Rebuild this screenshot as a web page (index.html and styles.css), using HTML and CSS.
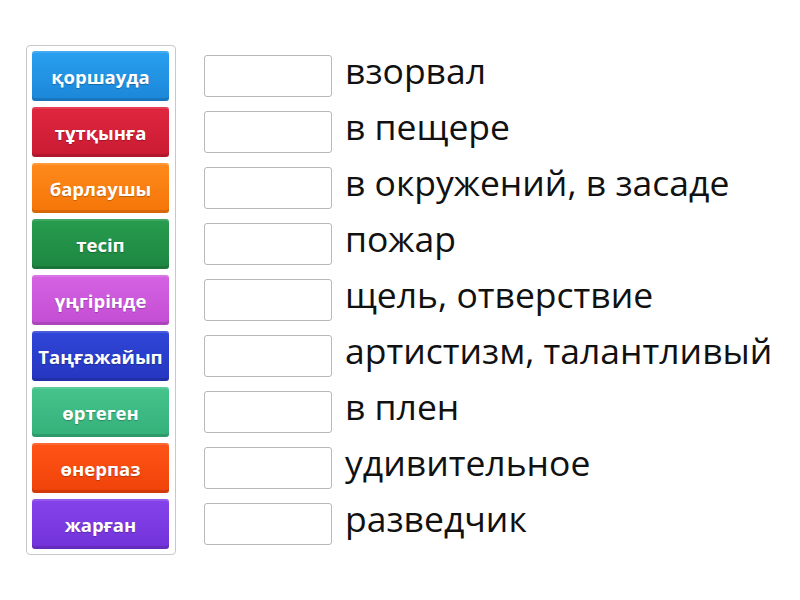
FILE: index.html
```html
<!DOCTYPE html>
<html lang="kk">
<head>
    <meta charset="UTF-8">
    <meta name="viewport" content="width=device-width, initial-scale=1.0">
    <title>Сәйкестендір</title>
    <link rel="stylesheet" href="styles.css">
</head>
<body>
    <div class="board">
        <!-- Cards to drag -->
        <div class="tiles">
            <div class="tile blue">қоршауда</div>
            <div class="tile red">тұтқынға</div>
            <div class="tile orange">барлаушы</div>
            <div class="tile green">тесіп</div>
            <div class="tile pink">үңгірінде</div>
            <div class="tile indigo">Таңғажайып</div>
            <div class="tile mint">өртеген</div>
            <div class="tile fire">өнерпаз</div>
            <div class="tile purple">жарған</div>
        </div>

        <!-- Drop slots with definitions -->
        <div class="answers">
            <div class="row"><div class="slot"></div><span>взорвал</span></div>
            <div class="row"><div class="slot"></div><span>в пещере</span></div>
            <div class="row"><div class="slot"></div><span>в окружений, в засаде</span></div>
            <div class="row"><div class="slot"></div><span>пожар</span></div>
            <div class="row"><div class="slot"></div><span>щель, отверствие</span></div>
            <div class="row"><div class="slot"></div><span>артистизм, талантливый</span></div>
            <div class="row"><div class="slot"></div><span>в плен</span></div>
            <div class="row"><div class="slot"></div><span>удивительное</span></div>
            <div class="row"><div class="slot"></div><span>разведчик</span></div>
        </div>
    </div>
</body>
</html>
```

FILE: styles.css
```css
/* General Styles */
body {
    margin: 0;
    padding: 0;
    background: #fff;
    font-family: "Open Sans", sans-serif;
    color: #111;
}

.board {
    display: flex;
    align-items: flex-start;
    gap: 28px;
    padding: 45px 0 0 26px;
}

/* Left column of cards */
.tiles {
    display: flex;
    flex-direction: column;
    gap: 6px;
    padding: 5px 6px 5px 5px;
    border: 1px solid #c8c8c8;
    border-radius: 4px;
}

.tile {
    width: 137px;
    height: 50px;
    display: flex;
    justify-content: center;
    align-items: center;
    border-radius: 3px;
    color: #fff;
    font-weight: bold;
    font-size: 18.5px;
    white-space: nowrap;
    text-shadow: 0 1px 1px rgba(0, 0, 0, 0.25);
    box-shadow: inset 0 -3px 0 rgba(0, 0, 0, 0.12), inset 0 2px 0 rgba(255, 255, 255, 0.12);
}

.blue { background: linear-gradient(#2aa0f0, #1b86d8); }
.red { background: linear-gradient(#e0263f, #c91b33); }
.orange { background: linear-gradient(#ff8a1c, #f57508); }
.green { background: linear-gradient(#279c4f, #1d8640); }
.pink { background: linear-gradient(#d562e2, #c34dd4); }
.indigo { background: linear-gradient(#3046d8, #2536c0); }
.mint { background: linear-gradient(#45c48c, #35b07a); }
.fire { background: linear-gradient(#ff5418, #ef4208); }
.purple { background: linear-gradient(#8544ea, #7232da); }

/* Right column */
.answers {
    display: flex;
    flex-direction: column;
    gap: 6px;
    padding-top: 6px;
}

.row {
    height: 50px;
    display: flex;
    align-items: center;
    gap: 13px;
}

.slot {
    width: 126px;
    height: 40px;
    border: 1px solid #b8b8b8;
    border-radius: 3px;
    background: #fff;
    flex-shrink: 0;
}

.row span {
    font-size: 35.5px;
    line-height: 1;
    white-space: nowrap;
    margin-bottom: 11px;
}
```
